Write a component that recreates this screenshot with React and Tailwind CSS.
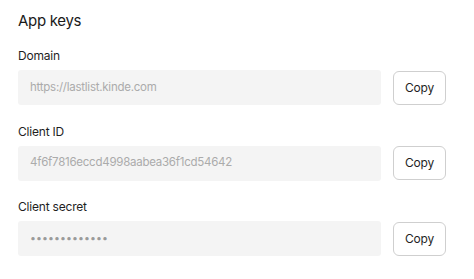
const fields = [
  { label: 'Domain', value: 'https://lastlist.kinde.com' },
  { label: 'Client ID', value: '4f6f7816eccd4998aabea36f1cd54642' },
  { label: 'Client secret', value: '•••••••••••••', secret: true },
]

function KeyField({ label, value, secret }) {
  return (
    <div className="flex flex-col">
      <label className="text-[12px] leading-[16px] tracking-[-0.2px] text-[#1f1f1f]">{label}</label>
      <div className="mt-[6px] flex items-center gap-[12px]">
        <div className="flex h-[35px] w-[363px] items-center rounded-[3px] bg-[#f4f4f4] pl-[12px]">
          <span
            className={
              secret
                ? 'text-[10.5px] tracking-[0.1px] text-[#9a9a9a]'
                : 'text-[11.5px] tracking-[-0.25px] text-[#ababab]'
            }
          >
            {value}
          </span>
        </div>
        <button
          type="button"
          className="flex h-[34px] w-[53px] items-center justify-center rounded-[6px] border border-[#cfcfcf] bg-white text-[12px] tracking-[-0.2px] text-[#1f1f1f]"
        >
          Copy
        </button>
      </div>
    </div>
  )
}

export default function App() {
  return (
    <div className="h-[279px] w-[474px] bg-white pl-[18px] pt-[11px] font-['Inter',sans-serif]">
      <h2 className="text-[15px] leading-[20px] tracking-[-0.3px] text-[#1a1a1a]">App keys</h2>
      <div className="mt-[17px] flex flex-col gap-[18.5px]">
        {fields.map((field) => (
          <KeyField key={field.label} {...field} />
        ))}
      </div>
    </div>
  )
}
